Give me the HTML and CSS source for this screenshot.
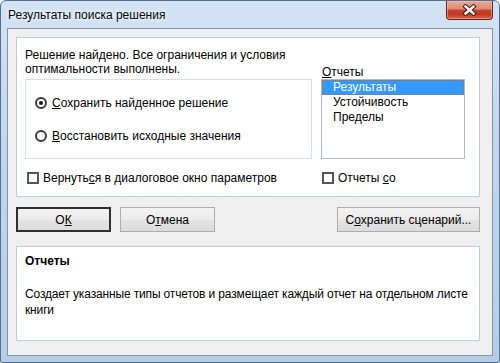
FILE: index.html
```html
<!DOCTYPE html>
<html lang="ru">
<head>
    <meta charset="UTF-8">
    <title>Результаты поиска решения</title>
    <link rel="stylesheet" href="styles.css">
</head>
<body>

<div class="window">
    <div class="titlebar">
        <span class="title">Результаты поиска решения</span>
        <span class="close-btn">
            <svg width="15" height="12" viewBox="0 0 15 12">
                <path d="M3.5 2.5 L11.5 9.5 M11.5 2.5 L3.5 9.5" stroke="#4a1a12" stroke-width="4.4" stroke-linecap="square"/>
                <path d="M3.5 2.5 L11.5 9.5 M11.5 2.5 L3.5 9.5" stroke="#ffffff" stroke-width="2.4" stroke-linecap="square"/>
            </svg>
        </span>
    </div>

    <div class="client">
        <div class="panel main-panel">
            <div class="grid">
                <p class="intro">Решение найдено. Все ограничения и условия оптимальности выполнены.</p>
                <label class="list-label"><u>О</u>тчеты</label>

                <div class="groupbox">
                    <div class="radio-row"><span class="radio checked"></span><span><u>С</u>охранить найденное решение</span></div>
                    <div class="radio-row"><span class="radio"></span><span><u>В</u>осстановить исходные значения</span></div>
                </div>

                <div class="listbox">
                    <div class="list-item selected">Результаты</div>
                    <div class="list-item">Устойчивость</div>
                    <div class="list-item">Пределы</div>
                </div>

                <div class="check-row"><span class="checkbox"></span><span>Вернуть<u>с</u>я в диалоговое окно параметров</span></div>
                <div class="check-row right-check"><span class="checkbox"></span><span>Отчеты <u>с</u>о</span></div>
            </div>
        </div>

        <div class="buttons">
            <button class="btn btn-default">О<u>К</u></button>
            <button class="btn">О<u>т</u>мена</button>
            <button class="btn btn-wide">С<u>о</u>хранить сценарий...</button>
        </div>

        <div class="panel info-panel">
            <div class="info-title">Отчеты</div>
            <p class="info-text">Создает указанные типы отчетов и размещает каждый отчет на отдельном листе книги</p>
        </div>
    </div>
</div>

</body>
</html>
```

FILE: styles.css
```css
body {
    margin: 0;
    font-family: "Liberation Sans", Arial, sans-serif;
    font-size: 12px;
    color: #000;
    background: #fff;
}
u {
    text-decoration: underline;
    text-underline-offset: 1px;
}
.window {
    width: 500px;
    height: 363px;
    box-sizing: border-box;
    border: 1px solid #54708f;
    border-radius: 6px 6px 2px 2px;
    padding: 0 6px 6px 6px;
    background: linear-gradient(to bottom, #d3e3f4 0%, #c2d7ee 40%, #b6cde8 100%);
    display: flex;
    flex-direction: column;
}
.titlebar {
    height: 27px;
    display: flex;
    justify-content: space-between;
    align-items: flex-start;
}
.title {
    padding: 7px 0 0 1px;
    line-height: 14px;
    text-shadow: 0 0 6px #fff, 0 0 3px #fff;
}
.close-btn {
    width: 47px;
    height: 19px;
    box-sizing: border-box;
    border: 1px solid #6b2117;
    border-top: none;
    border-radius: 0 0 4px 4px;
    background: linear-gradient(to bottom, #e8a898 0%, #dd8a76 45%, #c5432e 50%, #c23a26 75%, #d9654b 100%);
    box-shadow: inset 0 0 0 1px rgba(255, 210, 200, 0.45);
    display: flex;
    align-items: center;
    justify-content: center;
}
.client {
    flex: 1;
    border: 1px solid #8095ad;
    background: #f0f0f0;
    padding: 8px 12px 14px 8px;
    display: flex;
    flex-direction: column;
}
.panel {
    background: #fff;
    border: 1px solid #bfcddb;
    box-sizing: border-box;
}
.main-panel {
    height: 160px;
    padding: 10px 14px 0 8px;
}
.grid {
    display: grid;
    grid-template-columns: 287px 144px;
    column-gap: 9px;
}
.intro {
    margin: 0 0 3px;
    line-height: 14px;
}
.list-label {
    align-self: end;
    line-height: 14px;
    padding-left: 1px;
}
.groupbox {
    height: 80px;
    box-sizing: border-box;
    border: 1px solid #d5dfe5;
    padding: 16px 0 0 9px;
}
.radio-row {
    display: flex;
    align-items: center;
    line-height: 14px;
    margin-bottom: 19px;
}
.radio {
    width: 12px;
    height: 12px;
    box-sizing: border-box;
    border: 2px solid #3c3c3c;
    border-radius: 50%;
    background: #fff;
    margin-right: 5px;
    display: flex;
    align-items: center;
    justify-content: center;
}
.radio.checked::after {
    content: "";
    width: 4px;
    height: 4px;
    border-radius: 50%;
    background: #1a1a1a;
}
.listbox {
    height: 80px;
    box-sizing: border-box;
    border: 1px solid #b4b8bf;
    background: #fff;
}
.list-item {
    height: 15px;
    line-height: 15px;
    padding-left: 11px;
    box-sizing: border-box;
}
.list-item.selected {
    background: #3399ff;
    color: #fff;
    border: 1px dotted #cc6600;
    line-height: 13px;
    padding-left: 10px;
}
.check-row {
    display: flex;
    align-items: center;
    line-height: 14px;
    margin-top: 12px;
    padding-left: 2px;
}
.right-check {
    padding-left: 1px;
}
.checkbox {
    width: 12px;
    height: 12px;
    box-sizing: border-box;
    border: 2px solid #555;
    background: #fff;
    margin-right: 4px;
}
.buttons {
    display: flex;
    gap: 9px;
    margin-top: 10px;
}
.btn {
    width: 95px;
    height: 25px;
    font-family: inherit;
    font-size: 12px;
    color: #000;
    border: 1px solid #adadad;
    background: linear-gradient(to bottom, #f3f3f3 0%, #ececec 50%, #e3e3e3 51%, #dcdcdc 100%);
    padding: 0;
}
.btn-default {
    border: 2px solid #303030;
}
.btn-wide {
    width: 143px;
    margin-left: auto;
}
.info-panel {
    height: 95px;
    margin-top: 14px;
    padding: 6px 0 0 8px;
}
.info-title {
    font-weight: bold;
    line-height: 16px;
}
.info-text {
    margin: 17px 0 0;
    line-height: 16px;
    letter-spacing: -0.15px;
}
```
